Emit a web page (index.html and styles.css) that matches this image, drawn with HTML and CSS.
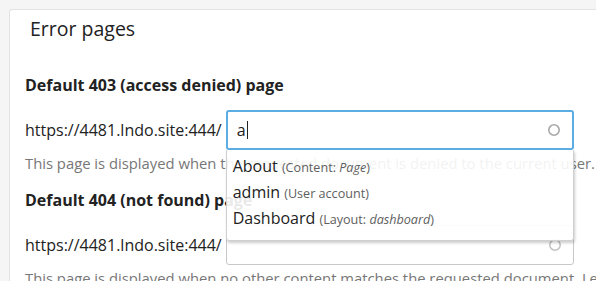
FILE: index.html
```html
<!DOCTYPE html>
<html>
<head>
<meta charset="utf-8">
<link rel="stylesheet" href="styles.css">
</head>
<body>
<div class="panel">
  <div class="legend">Error pages</div>
  <div class="item">
    <div class="label">Default 403 (access denied) page</div>
    <div class="row">
      <span class="prefix">https://4481.lndo.site:444/</span>
      <div class="field">
        <div class="input focused"><span class="val">a</span><span class="caret"></span>
          <svg class="throbber" width="14" height="14" viewBox="0 0 14 14"><circle cx="7" cy="7" r="5.2" fill="none" stroke="#a8a8a8" stroke-width="1.6"/></svg>
        </div>
        <ul class="autocomplete">
          <li><span class="main">About</span> <span class="meta">(Content: <em>Page</em>)</span></li>
          <li><span class="main">admin</span> <span class="meta">(User account)</span></li>
          <li><span class="main">Dashboard</span> <span class="meta">(Layout: <em>dashboard</em>)</span></li>
        </ul>
      </div>
    </div>
    <div class="desc">This page is displayed when the requested document is denied to the current user.</div>
  </div>
  <div class="item">
    <div class="label">Default 404 (not found) page</div>
    <div class="row">
      <span class="prefix">https://4481.lndo.site:444/</span>
      <div class="field">
        <div class="input">
          <svg class="throbber" width="14" height="14" viewBox="0 0 14 14"><circle cx="7" cy="7" r="5.2" fill="none" stroke="#c4c4c4" stroke-width="1.6"/></svg>
        </div>
      </div>
    </div>
    <div class="desc">This page is displayed when no other content matches the requested document. Leave blank to display a generic "page not found" page.</div>
  </div>
</div>
</body>
</html>
```
FILE: styles.css
```css
html, body {
  margin: 0;
  padding: 0;
}
body {
  background: #f5f5f5;
  font-family: "Open Sans", "Liberation Sans", sans-serif;
  color: #222;
  overflow: hidden;
  width: 596px;
  height: 281px;
}
.panel {
  margin: 9px 0 0 9px;
  background: #fff;
  border: 1px solid #e3e3e3;
  border-right: none;
  border-bottom: none;
  border-top-left-radius: 3px;
  padding: 0 0 0 15px;
  height: 400px;
  box-sizing: border-box;
}
.legend {
  font-size: 19.5px;
  line-height: 24px;
  padding: 7px 0 0 5px;
  color: #222;
}
.item {
  margin-top: 34px;
}
.item + .item {
  margin-top: 17px;
}
.label {
  font-weight: 700;
  font-size: 16px;
  line-height: 20px;
  color: #222;
}
.row {
  display: flex;
  align-items: center;
  margin-top: 15px;
}
.prefix {
  font-size: 16px;
  color: #222;
  margin-right: 4px;
  white-space: nowrap;
}
.field {
  position: relative;
}
.input {
  width: 348px;
  height: 40px;
  box-sizing: border-box;
  border: 1px solid #c8c8c8;
  border-radius: 3px;
  display: flex;
  align-items: center;
  padding: 0 10px;
  font-size: 16px;
  position: relative;
}
.input.focused {
  border: 2px solid #5aaee3;
  padding-left: 9px;
}
.val {
  color: #222;
}
.caret {
  display: inline-block;
  width: 1px;
  height: 18px;
  background: #222;
  margin-left: 1px;
}
.throbber {
  position: absolute;
  right: 11px;
  top: 50%;
  margin-top: -7px;
}
.desc {
  font-size: 14.8px;
  line-height: 20px;
  color: #777;
  margin-top: 3px;
  white-space: nowrap;
}
.autocomplete {
  position: absolute;
  left: 0;
  top: 40px;
  width: 348px;
  box-sizing: border-box;
  margin: 0;
  padding: 4px 0 8px;
  list-style: none;
  background: rgba(255, 255, 255, 0.9);
  border: 1px solid #d0d0d0;
  border-top: none;
  border-radius: 0 0 3px 3px;
  box-shadow: 1px 2px 3px rgba(0, 0, 0, 0.2);
  z-index: 10;
}
.autocomplete li {
  padding: 0 6px;
  line-height: 25px;
  white-space: nowrap;
}
.main {
  font-size: 16px;
  color: #222;
}
.meta {
  font-size: 12.6px;
  color: #5e5e5e;
}
```
